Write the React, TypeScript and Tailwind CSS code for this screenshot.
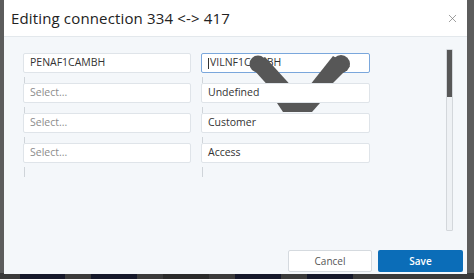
import React from 'react';
import { X } from 'lucide-react';

const font = { fontFamily: '"Open Sans", "Liberation Sans", sans-serif' };

type Row = { left: string; right: string; leftPlaceholder?: boolean; focused?: boolean };

const rows: Row[] = [
  { left: 'PENAF1CAMBH', right: 'VILNF1CCMBH', focused: true },
  { left: 'Select...', right: 'Undefined', leftPlaceholder: true },
  { left: 'Select...', right: 'Customer', leftPlaceholder: true },
  { left: 'Select...', right: 'Access', leftPlaceholder: true },
];

const Field: React.FC<{ text: string; placeholder?: boolean; focused?: boolean; width: string; last?: boolean }> = ({
  text,
  placeholder,
  focused,
  width,
  last,
}) => (
  <div className={`flex flex-col ${width}`}>
    <div
      className={`h-[20px] rounded-[2px] bg-white flex items-center pl-[6px] text-[10.5px] border ${
        focused ? 'border-[#7aa7dc]' : 'border-[#dfe4e9]'
      } ${placeholder ? 'text-[#8c8c8c]' : 'text-[#333]'}`}
    >
      {focused && <span className="w-px h-[11px] bg-[#333] mr-px" />}
      {text}
    </div>
    <div className={`ml-[1px] mt-[4px] w-px bg-[#cfd4d9] ${last ? 'h-[10px]' : 'h-[6px]'}`} />
  </div>
);

const Chevron: React.FC = () => (
  <svg className="absolute left-[240px] top-[50px] z-10 pointer-events-none" width="120" height="70" viewBox="240 50 120 70">
    <g fill="#575757">
      <circle cx="258" cy="64" r="8.5" />
      <polygon points="249.5,65 265,57 295,90 272,90" />
      <circle cx="341" cy="64" r="9" />
      <polygon points="333,56 350,66 326,90 306,90" />
      <polygon points="275,97 322,97 320,103 312,112 283,112 277,103" />
    </g>
  </svg>
);

export default function App() {
  return (
    <div className="relative w-[474px] h-[279px] overflow-hidden bg-[#5c5c5c]" style={font}>
      {/* page behind the dialog */}
      <div className="absolute left-0 right-0 bottom-0 h-[6px] bg-[#3a3a3a] flex gap-[26px] pl-[20px]">
        <div className="w-[45px] h-full bg-[#15182a]" />
        <div className="w-[46px] h-full bg-[#15182a]" />
        <div className="w-[46px] h-full bg-[#2a2a2a]" />
        <div className="w-[46px] h-full bg-[#15182a]" />
        <div className="w-[46px] h-full bg-[#15182a]" />
      </div>

      <div className="relative ml-[4px] w-[463px] h-[274px] flex flex-col bg-[#f4f7fa]">
        {/* header */}
        <div className="h-[37px] shrink-0 bg-white border-b border-[#e3e8ec] flex items-center justify-between pl-[7px] pr-[8px]">
          <span className="text-[15px] text-[#222] tracking-[0.15px]">Editing connection 334 &lt;-&gt; 417</span>
          <X size={13} strokeWidth={1.3} className="text-[#777]" />
        </div>

        {/* body */}
        <div className="relative flex-1 pt-[16px] pl-[19px] flex flex-col">
          {rows.map((r, i) => (
            <div key={i} className={`flex gap-[10px] ${i > 0 ? 'relative z-20' : ''}`}>
              <Field text={r.left} placeholder={r.leftPlaceholder} width="w-[168px]" last={i === rows.length - 1} />
              <Field text={r.right} focused={r.focused} width="w-[169px]" last={i === rows.length - 1} />
            </div>
          ))}

          {/* scrollbar */}
          <div className="absolute left-[442px] top-[12px] w-[7px] h-[182px] border border-[#d3d7db] bg-[#eef1f4] rounded-[1px]">
            <div className="h-[47px] bg-[#575757]" />
          </div>
        </div>

        {/* footer */}
        <div className="shrink-0 flex justify-end gap-[6px] pr-[4px] pb-[2px]">
          <button className="w-[84px] h-[22px] bg-white border border-[#d5dadf] rounded-[2px] text-[10px] text-[#555]">
            Cancel
          </button>
          <button className="w-[85px] h-[22px] bg-[#0b6db8] rounded-[2px] text-[10px] font-semibold text-white">
            Save
          </button>
        </div>
      </div>

      <Chevron />
    </div>
  );
}
